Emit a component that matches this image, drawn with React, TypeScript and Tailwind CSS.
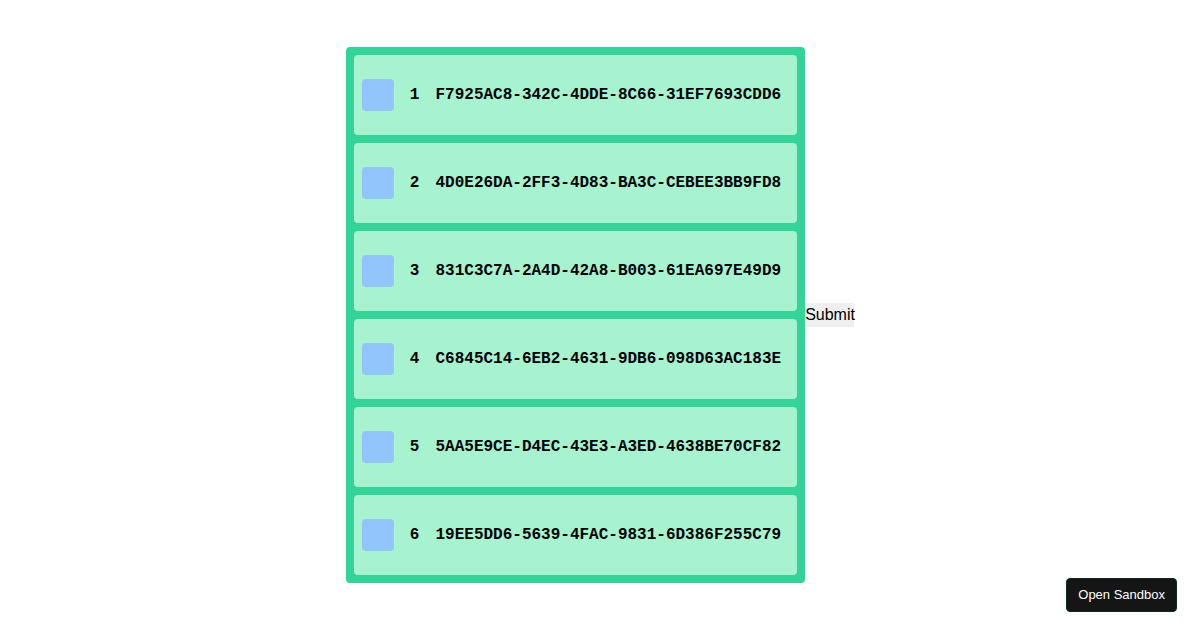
const items = [
  "F7925AC8-342C-4DDE-8C66-31EF7693CDD6",
  "4D0E26DA-2FF3-4D83-BA3C-CEBEE3BB9FD8",
  "831C3C7A-2A4D-42A8-B003-61EA697E49D9",
  "C6845C14-6EB2-4631-9DB6-098D63AC183E",
  "5AA5E9CE-D4EC-43E3-A3ED-4638BE70CF82",
  "19EE5DD6-5639-4FAC-9831-6D386F255C79",
];

export default function App() {
  return (
    <main className="flex min-h-screen items-center justify-center bg-white font-['Liberation_Sans',Arial,sans-serif] text-black">
      <ol className="flex flex-col gap-2 rounded bg-[#34d399] p-2">
        {items.map((id, index) => (
          <li
            key={id}
            className="flex h-20 items-center rounded bg-[#a7f3d0] p-2 font-['Liberation_Mono','Courier_New',monospace] text-base leading-[26px] font-bold"
          >
            <span className="size-8 rounded bg-[#93c5fd]" />
            <span className="px-4">{index + 1}</span>
            <span className="pr-2">{id}</span>
          </li>
        ))}
      </ol>
      <button type="button" className="w-[49px] bg-[#efefef] text-base whitespace-nowrap">
        Submit
      </button>
      <a
        href="#sandbox"
        className="fixed right-[23px] bottom-[18px] rounded border border-[#0f2a20] bg-[#151515] px-[11px] py-2 text-[13px] leading-4 text-white"
      >
        Open Sandbox
      </a>
    </main>
  );
}
